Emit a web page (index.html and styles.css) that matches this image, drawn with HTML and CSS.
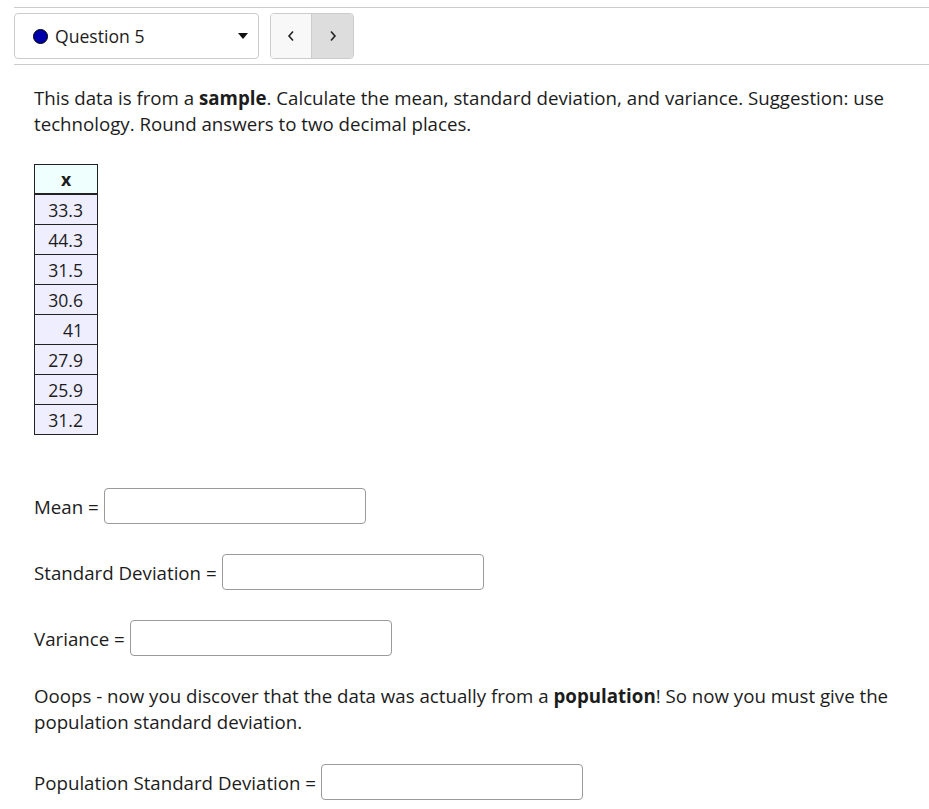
FILE: index.html
```html
<!DOCTYPE html>
<html>
<head>
<meta charset="utf-8">
<link rel="stylesheet" href="styles.css">
</head>
<body>
<div class="topbar">
  <div class="qselect">
    <span class="dot"></span>
    <span class="qlabel">Question 5</span>
    <span class="caret"></span>
  </div>
  <div class="nav">
    <button class="navbtn prev"><svg width="8" height="12" viewBox="0 0 8 12"><path d="M6 1.5 L2 6 L6 10.5" fill="none" stroke="#222" stroke-width="1.6"/></svg></button>
    <button class="navbtn next"><svg width="8" height="12" viewBox="0 0 8 12"><path d="M2 1.5 L6 6 L2 10.5" fill="none" stroke="#222" stroke-width="1.6"/></svg></button>
  </div>
</div>
<main class="content">
  <p class="para">This data is from a <b>sample</b>. Calculate the mean, standard deviation, and variance. Suggestion: use technology. Round answers to two decimal places.</p>
  <table class="data">
    <thead><tr><th>x</th></tr></thead>
    <tbody>
      <tr><td>33.3</td></tr>
      <tr><td>44.3</td></tr>
      <tr><td>31.5</td></tr>
      <tr><td>30.6</td></tr>
      <tr><td>41</td></tr>
      <tr><td>27.9</td></tr>
      <tr><td>25.9</td></tr>
      <tr><td>31.2</td></tr>
    </tbody>
  </table>
  <div class="field first">Mean = <input class="answer" type="text"></div>
  <div class="field">Standard Deviation = <input class="answer" type="text"></div>
  <div class="field">Variance = <input class="answer" type="text"></div>
  <p class="para para2">Ooops - now you discover that the data was actually from a <b>population</b>! So now you must give the population standard deviation.</p>
  <div class="field last">Population Standard Deviation = <input class="answer" type="text"></div>
</main>
</body>
</html>
```
FILE: styles.css
```css
html, body {
  margin: 0;
  padding: 0;
  background: #fff;
}
body {
  font-family: "Open Sans", "DejaVu Sans", sans-serif;
  color: #1c1c1c;
  font-size: 18.7px;
}
.topbar {
  margin: 7px 0 0 14px;
  border-top: 1px solid #cccccc;
  border-bottom: 1px solid #cccccc;
  padding: 5px 0 5px 0;
  display: flex;
  align-items: center;
  gap: 11px;
}
.qselect {
  box-sizing: border-box;
  width: 245px;
  height: 46px;
  border: 1px solid #cccccc;
  border-radius: 4px;
  display: flex;
  align-items: center;
  padding-left: 18px;
  padding-right: 9px;
}
.dot {
  box-sizing: border-box;
  width: 15px;
  height: 15px;
  border-radius: 50%;
  background: #0000aa;
  border: 1px solid #000;
}
.qlabel {
  margin-left: 7px;
  font-size: 17.6px;
  flex: 1;
}
.caret {
  width: 0;
  height: 0;
  border-left: 5px solid transparent;
  border-right: 5px solid transparent;
  border-top: 6px solid #111;
  margin-right: 1px;
}
.nav {
  display: flex;
  height: 46px;
  box-sizing: border-box;
  border: 1px solid #cccccc;
  border-radius: 4px;
  overflow: hidden;
}
.navbtn {
  width: 41px;
  border: none;
  margin: 0;
  padding: 0;
  display: flex;
  align-items: center;
  justify-content: center;
}
.prev { background: #f8f8f8; border-right: 1px solid #cccccc; }
.next { background: #dddddd; }
.content {
  padding: 0 34px;
  display: flex;
  flex-direction: column;
  align-items: flex-start;
}
.para {
  margin: 20px 0 0 0;
  line-height: 26px;
}
.data {
  margin-top: 27px;
  border-collapse: collapse;
  width: 64px;
  font-size: 17.6px;
}
.data th {
  background: #eefffd;
  border: 1px solid #222;
  border-bottom: 2px solid #222;
  height: 28px;
  padding: 0;
  font-weight: bold;
  text-align: center;
}
.data td {
  background: #eeeeff;
  border: 1px solid #222;
  height: 29px;
  padding: 0 14px 0 0;
  text-align: right;
}
.field {
  display: flex;
  align-items: center;
  margin-top: 30px;
}
.field.first { margin-top: 53px; }
.answer {
  box-sizing: border-box;
  width: 262px;
  height: 36px;
  margin-left: 5px;
  border: 1px solid #9a9a9a;
  border-radius: 4px;
  background: #fff;
}
.para2 { margin-top: 27px; }
.field.last { margin-top: 29px; }
```
